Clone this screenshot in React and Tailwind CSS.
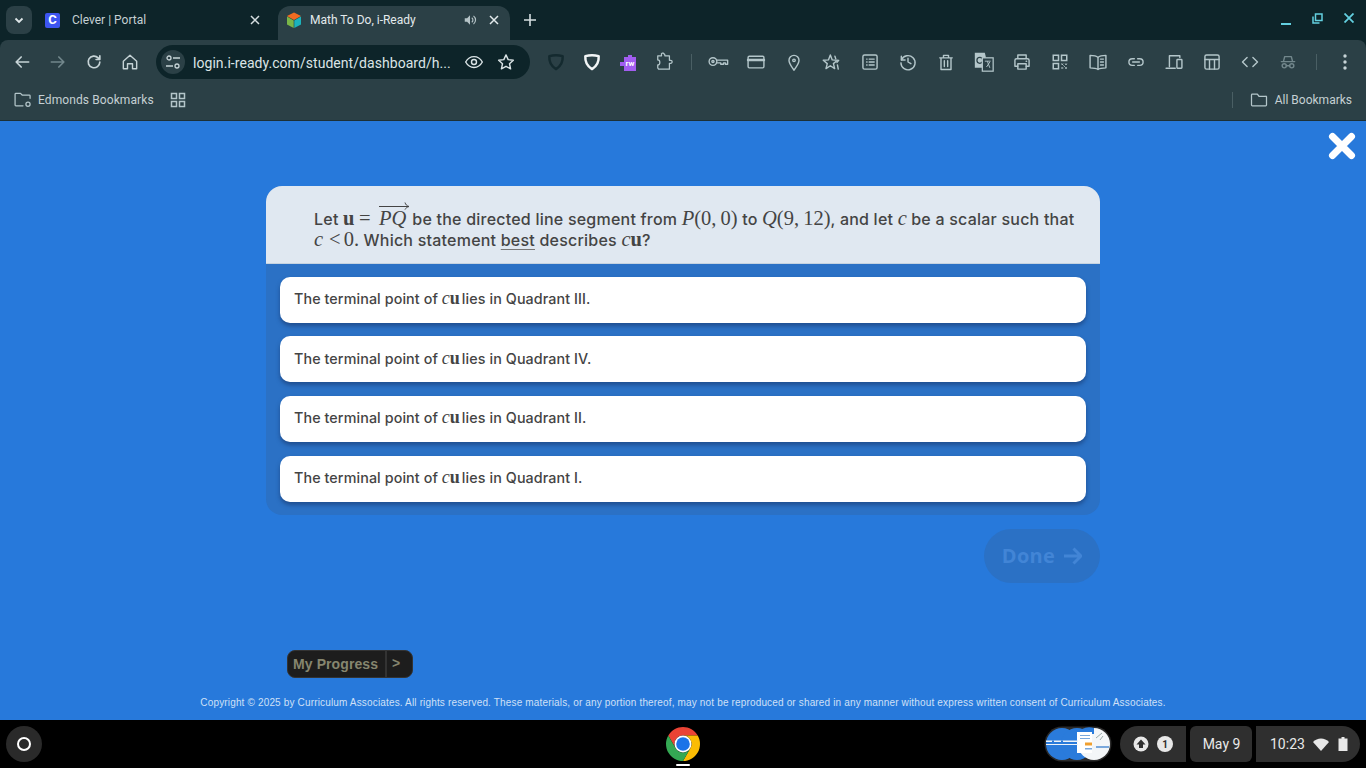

const S = ({ children, w = 20, sw = 1.7, c = "#b4c6ca", vb = "0 0 24 24", fill = "none" }) => (
  <svg width={w} height={w} viewBox={vb} fill={fill} stroke={c} strokeWidth={sw} strokeLinecap="round" strokeLinejoin="round" className="block">{children}</svg>
);

const Slot = ({ w = "w-[38px]", children }) => <div className={`${w} h-full shrink-0 flex items-center justify-center`}>{children}</div>;

const icons = [
  <S w={22} sw={1.5}><circle cx="6.500" cy="11.500" r="4.200" /><path d="M10.700 10H22.500v4.500h-2.500v-1.500h-2v1.500h-3v-1.500h-4.800" /><circle cx="6.500" cy="11.500" r="1.200" /></S>,
  <S><rect x="2.500" y="5" width="19" height="14" rx="1.500" /><path d="M2.500 9.500h19" strokeWidth="3" /></S>,
  <S><path d="M12 22c-1-2.500-6-7-6-12a6 6 0 0 1 12 0c0 5-5 9.500-6 12z" /><circle cx="12" cy="10" r="1.500" /></S>,
  <S><path d="M10 3.500l2.300 6 6.200.4-4.800 4 1.500 6-5.200-3.400-5.200 3.400 1.500-6-4.800-4 6.200-.4z" /><path d="M15.500 5l1 3M20 10l-2 2.500M18.500 15.500l1 5" /></S>,
  <S><rect x="3.500" y="3.500" width="17" height="17" rx="2" /><path d="M8 8.500h.5M8 12h.5M8 15.500h.5M11 8.500h6M11 12h6M11 15.500h6" /></S>,
  <S><path d="M4 5v4.500h4.500" /><path d="M4.200 9.500A8.500 8.500 0 1 1 3.500 13" /><path d="M12 7.500V12l3.500 2" /></S>,
  <S><path d="M4.500 7h15M9 7V4h6v3M6 7v14h12V7M10 10.500v7M14 10.500v7" /></S>,
  <svg width="20" height="20" viewBox="0 0 24 24" className="block"><path d="M1 1h12l1 4h0v14H1z" fill="#b4c6ca" /><circle cx="7" cy="10" r="3.500" fill="none" stroke="#2b4046" strokeWidth="1.500" /><rect x="10" y="7" width="13" height="16" fill="#2b4046" stroke="#b4c6ca" strokeWidth="1.500" /><path d="M13 11h7M16 11l3 8M19 12l-4 6" stroke="#b4c6ca" strokeWidth="1.100" fill="none" /></svg>,
  <S><path d="M7 8V3.500h10V8M7 17H3.500V10a2 2 0 0 1 2-2h13a2 2 0 0 1 2 2v7H17" /><rect x="7" y="14" width="10" height="6.500" /><path d="M17 11h.5" /></S>,
  <svg width="18" height="18" viewBox="0 0 24 24" className="block" fill="none" stroke="#b4c6ca" strokeWidth="2"><rect x="3" y="3" width="7" height="7" /><rect x="14" y="3" width="7" height="7" /><rect x="3" y="14" width="7" height="7" /><path d="M14 14l2 2M19 14l2 2M16.500 16.500l2 2M14 19l2 2M19 19l2 2M21 14l-2 2M16 14l-2 2M21 19l-2 2M16 19l-2 2" strokeWidth="1.200" /></svg>,
  <S><path d="M12 6.500C10 4.500 6 4 2.500 4v15c3.500 0 7.500.5 9.500 2 2-1.500 6-2 9.500-2V4c-3.500 0-7.500.5-9.500 2.500zM12 6.500V21M15 8.500h3.500M15 12h3.500M15 15.500h3.500" /></S>,
  <S><path d="M10 8H7.500a4 4 0 0 0 0 8H10M14 8h2.500a4 4 0 0 1 0 8H14M8 12h8" /></S>,
  <S><path d="M19 6.500V4.500H6.500v13M2.500 19.500h11" /><rect x="15.500" y="9" width="6" height="10.500" rx=".8" /></S>,
  <S><rect x="3.500" y="3.500" width="17" height="17" rx="2" /><path d="M3.500 9h17M9 9v11.500M15 9v11.500" /></S>,
  <S><path d="M8.500 6.500L3 12l5.500 5.500M15.500 6.500L21 12l-5.500 5.500" /></S>,
  <S c="#72878c"><path d="M4 11.500h16M6.500 11.500L8 5.500h8l1.500 6" /><circle cx="7.500" cy="16.500" r="2.500" /><circle cx="16.500" cy="16.500" r="2.500" /><path d="M10 16.500h4" /></S>,
];

const Shield = ({ c }) => (
  <svg width="20" height="20" viewBox="0 0 24 24" className="block" fill="none" stroke={c} strokeWidth="3" strokeLinejoin="round"><path d="M4 5c5-1.500 11-1.500 16 0 .5 7-3 12.500-8 15.500C7 17.500 3.500 12 4 5z" /></svg>
);

const Tune = () => (
  <svg width="16" height="16" viewBox="0 0 16 16" fill="none" stroke="#c6d3d6" strokeWidth="1.300" className="block"><circle cx="4" cy="4" r="2" /><path d="M8 4h7M1 12h7" /><circle cx="12" cy="12" r="2" /></svg>
);

const Cube = () => (
  <svg width="16" height="17" viewBox="0 0 16 17" className="block"><path d="M8 .5l7 3.500-7 4-7-4z" fill="#f26b21" /><path d="M1 4.500l6.700 4V16L1 12.500z" fill="#7ab648" /><path d="M15 4.500l-6.700 4V16l6.700-3.500z" fill="#1bb3bc" /></svg>
);

const Chrome = () => (
  <svg width="34" height="34" viewBox="2 2 44 44" className="block">
    <path d="M43.050 13A22 22 0 0 0 4.950 13L14.470 29.500A11 11 0 0 1 24 13Z" fill="#ea4335" />
    <path d="M24 46A22 22 0 0 0 43.050 13L24 13A11 11 0 0 1 33.530 29.500Z" fill="#fbbc04" />
    <path d="M4.950 13A22 22 0 0 0 24 46L33.530 29.500A11 11 0 0 1 14.470 29.500Z" fill="#34a853" />
    <circle cx="24" cy="24" r="11" fill="#fff" /><circle cx="24" cy="24" r="8.800" fill="#1a73e8" />
  </svg>
);

const Thumb = () => (
  <svg width="68" height="36" viewBox="0 0 68 36" className="block">
    <rect x="0.500" y="0.500" width="67" height="35" rx="17.500" fill="#2a2a2a" />
    <circle cx="18" cy="18" r="16" fill="#2a7bdb" />
    <circle cx="33" cy="18" r="16" fill="#2a7bdb" />
    <circle cx="50" cy="18" r="16" fill="#f4f6f8" />
    <path d="M38 3a16 16 0 0 1 12-1v6H38z" fill="#2a7bdb" />
    <path d="M33 6h15v21H33z" fill="#fff" />
    <path d="M2 14.500h32v1.500H2zM2 18h32v1H2zM48 20h17v2.500H48z" fill="#eef3f8" />
    <path d="M8 14.500h2v1.500H8zM17 14.500h2v1.500h-2z" fill="#2a7bdb" />
    <path d="M41 16.500h7v3h-7z" fill="#f0a030" />
    <path d="M36 9h10v1H36zM36 12h10v1H36zM41 22h7v1.500h-7zM52 20h13v2H52z" fill="#7aa8dc" />
    <path d="M52 12l6-5M56 14l3-4" stroke="#9aa" strokeWidth="1" />
  </svg>
);

const M = ({ children, className = "", size = "text-[20.500px]" }) => <span className={`[font-family:'Liberation_Serif',serif] leading-none tracking-normal ${size} ${className}`}>{children}</span>;
const I = ({ children }) => <M className="italic">{children}</M>;
const B = ({ children }) => <M className="font-bold">{children}</M>;

const answers = ["III", "IV", "II", "I"];

export default function App() {
  return (
    <div className="w-[1366px] h-[768px] overflow-hidden flex flex-col [font-family:Roboto,sans-serif]">
      <div className="h-10 bg-[#0d2429] flex shrink-0 pt-[6px]">
        <div className="ml-[6px] w-[26px] h-[28px] rounded-lg bg-[#2b4046] flex items-center justify-center">
          <svg width="12" height="12" viewBox="0 0 12 12" fill="none" stroke="#dfe7e9" strokeWidth="1.800"><path d="M2.500 4.500L6 8l3.500-3.500" /></svg>
        </div>
        <div className="w-[246px] h-[28px] flex items-center pl-[13px] pr-[18px] text-xs text-[#c5d0d3]">
          <div className="w-[15px] h-[15px] rounded-[2px] bg-[#3d55f0] text-white text-[13px] font-bold flex items-center justify-center">C</div>
          <span className="ml-3 flex-1">Clever | Portal</span>
          <svg width="10" height="10" viewBox="0 0 10 10" stroke="#d5dee0" strokeWidth="1.500"><path d="M1 1l8 8M9 1l-8 8" /></svg>
        </div>
        <div className="w-[232px] h-[34px] rounded-t-xl bg-[#2b4046] flex items-center pl-2 pr-[11px] pb-[6px] text-xs text-[#e3eaec]">
          <Cube />
          <span className="ml-2 flex-1">Math To Do, i-Ready</span>
          <svg width="14" height="14" viewBox="0 0 24 24" fill="#b5c3c7" className="mr-[12px]"><path d="M3 9v6h4l5 5V4L7 9z" /><path d="M15 8c1.500 1 2 2.500 2 4s-.5 3-2 4M18 5c2.500 2 3.500 4.500 3.500 7s-1 5-3.500 7" fill="none" stroke="#b5c3c7" strokeWidth="2" /></svg>
          <svg width="10" height="10" viewBox="0 0 10 10" stroke="#e3eaec" strokeWidth="1.500"><path d="M1 1l8 8M9 1l-8 8" /></svg>
        </div>
        <div className="ml-[14px] h-[28px] flex items-center">
          <svg width="12" height="12" viewBox="0 0 12 12" stroke="#d5dee0" strokeWidth="1.600"><path d="M6 0v12M0 6h12" /></svg>
        </div>
        <div className="flex-1" />
        <div className="h-[28px] flex items-center">
          <div className="w-8 flex justify-center"><div className="w-[10px] h-[2px] bg-[#63d0e0] mt-[7px]" /></div>
          <div className="w-8 flex justify-center">
            <svg width="11" height="11" viewBox="0 0 11 11" fill="none" stroke="#63d0e0" strokeWidth="1.500" className="-mt-1 -ml-[2px]"><rect x="3.500" y="1" width="6.500" height="6.500" /><path d="M1 3.500V10h6.500" /></svg>
          </div>
          <div className="w-8 mr-[0px] flex justify-center">
            <svg width="10" height="10" viewBox="0 0 10 10" stroke="#63d0e0" strokeWidth="1.800" className="-mt-1 -ml-[2px]"><path d="M.5.500l9 9M9.500.500l-9 9" /></svg>
          </div>
        </div>
      </div>

      <div className="bg-[#0d2429] shrink-0">
        <div className="bg-[#2b4046] rounded-t-lg">
          <div className="h-11 flex items-center pl-1">
            <Slot w="w-9"><S c="#c6d3d6" sw="2"><path d="M20 12H5M11 6l-6 6 6 6" /></S></Slot>
            <Slot w="w-9"><S c="#72878c" sw="2"><path d="M4 12h15M13 6l6 6-6 6" /></S></Slot>
            <Slot w="w-9"><S c="#c6d3d6" sw="2"><path d="M19 12a7 7 0 1 1-2-5l2 2M19 4.500V9h-4.500" /></S></Slot>
            <Slot w="w-9"><S c="#c6d3d6"><path d="M4 11l8-7 8 7v9h-5v-6H9v6H4z" /></S></Slot>
            <div className="ml-2 w-[374px] h-[34px] rounded-full bg-[#0d2429] flex items-center pl-[5px] pr-[14px] shrink-0">
              <div className="w-6 h-6 rounded-full bg-[#2b4046] flex items-center justify-center"><Tune /></div>
              <span className="ml-2 text-sm text-[#dbe4e6] flex-1 pt-[2px] tracking-[0.05px]">login.i-ready.com/student/dashboard/h...</span>
              <S c="#dbe4e6"><path d="M2 12c2.500-4.500 6-6.500 10-6.500s7.500 2 10 6.500c-2.500 4.500-6 6.500-10 6.500S4.500 16.500 2 12z" /><circle cx="12" cy="12" r="3" /></S>
              <div className="ml-3"><S c="#dbe4e6"><path d="M12 3.500l2.600 5.700 6.200.7-4.600 4.200 1.300 6.100L12 17.200l-5.500 3 1.300-6.100-4.600-4.200 6.200-.7z" /></S></div>
            </div>
            <div className="ml-2 h-full flex items-center">
              <Slot w="w-9"><Shield c="#142a2f" /></Slot>
              <Slot w="w-9"><Shield c="#f2f5f6" /></Slot>
              <Slot w="w-9">
                <div className="relative w-[12px] h-[14px] bg-[#a25df0] ml-1 mt-1 flex items-center justify-center text-white text-[8px] font-bold leading-none">
                  rw
                  <div className="absolute -top-[2px] left-[4px] w-[4px] h-[2px] bg-[#a25df0]" />
                  <div className="absolute top-[5px] -left-1 w-1 h-[4px] bg-[#a25df0]" />
                </div>
              </Slot>
              <Slot w="w-9"><S sw="1.500"><path d="M4.500 4.500H9V3.500a1.500 1.500 0 0 1 3-1.200 1.500 1.500 0 0 1 1 1.200v1h5.500V10H20a1.800 1.800 0 0 1 0 3.600h-1.500v7H5.500l-1-1.500V15.500C6 15.500 7 14 7 12.500S6 9.500 4.500 9.500z" /></S></Slot>
              <div className="ml-[9px] mr-[7px] w-px h-[16px] bg-[#4a5f64]" />
              {icons.map((ic, i) => <Slot key={i}>{ic}</Slot>)}
              <div className="ml-[9px] w-px h-[16px] bg-[#4a5f64]" />
              <div className="ml-[26px]"><svg width="4" height="16" viewBox="0 0 4 16" fill="#c6d3d6" className="block"><circle cx="2" cy="2" r="1.700" /><circle cx="2" cy="8" r="1.700" /><circle cx="2" cy="14" r="1.700" /></svg></div>
            </div>
          </div>
          <div className="h-9 flex items-center text-xs text-[#c5d0d3] pl-[13px] pr-[14px] pb-[6px] pt-[1px]">
            <S c="#b4c6ca" sw="1.500"><path d="M20.500 10V7a1 1 0 0 0-1-1H11L9 4H3.500a1 1 0 0 0-1 1v13a1 1 0 0 0 1 1H12" /><circle cx="18" cy="17" r="2.500" /></S>
            <span className="ml-[5px] tracking-[0.1px]">Edmonds Bookmarks</span>
            <div className="ml-[16px]"><svg width="16" height="16" viewBox="0 0 16 16" fill="none" stroke="#b4c6ca" strokeWidth="1.500" className="block"><rect x="1.500" y="1.500" width="5" height="5" /><rect x="9.500" y="1.500" width="5" height="5" /><rect x="1.500" y="9.500" width="5" height="5" /><rect x="9.500" y="9.500" width="5" height="5" /></svg></div>
            <div className="flex-1" />
            <div className="w-px h-[16px] bg-[#4a5f64] mr-[16px]" />
            <S c="#b4c6ca" sw="1.500"><path d="M21 8v10a1 1 0 0 1-1 1H4a1 1 0 0 1-1-1V6a1 1 0 0 1 1-1h6l2 2.500h8a1 1 0 0 1 1 .5z" /></S>
            <span className="ml-[6px]">All Bookmarks</span>
          </div>
        </div>
      </div>

      <div className="h-px bg-[#1c3036] shrink-0" />

      <main className="relative flex-1 min-h-0 bg-[#2779db] flex flex-col">
        <svg width="28" height="28" viewBox="0 0 28 28" className="absolute top-[11px] right-[10px]" stroke="#fff" strokeWidth="7" strokeLinecap="round"><path d="M4.500 4.500l19 19M23.500 4.500l-19 19" /></svg>

        <section className="mt-[65px] ml-[266px] w-[834px] rounded-2xl bg-[#2b71c5] shrink-0 [font-family:Inter,sans-serif]">
          <div className="h-[78px] rounded-t-2xl bg-[#e0e8f1] border-b border-[#c6d3e0] pl-[48px] pr-6 pt-[21.500px] text-[#444] text-[16px] leading-[20px] font-medium tracking-[0.22px] whitespace-nowrap">
            Let <B>u</B> <M className="mr-[4px]">=</M>{" "}
            <span className="relative inline-block leading-none mr-[1.500px]">
              <I>PQ</I>
              <svg width="31" height="9" viewBox="0 0 31 9" className="absolute -top-[7px] left-0" fill="none" stroke="#444" strokeWidth="1"><path d="M0 5.500h29.500M26 1.500c.5 2 2 3.500 4 4-2 .5-3.500 2-4 3" /></svg>
            </span>{" "}
            be the directed line segment from <I>P</I><M>(0,{"\u2009"}0)</M> to <I>Q</I><M>(9,{"\u2009"}12)</M>, and let <I>c</I> be a scalar such that
            <br />
            <I>c</I><M className="ml-[6px] mr-[3px]">&lt;</M><M>0.</M> Which statement <span className="underline decoration-[#777] underline-offset-[3px]">best</span> describes <I>c</I><B>u</B>?
          </div>
          <div className="pt-[12.600px] px-[14px] pb-[13px] flex flex-col gap-[13.700px]">
            {answers.map((a) => (
              <div key={a} className="h-[46px] rounded-[10px] bg-white shadow-[0_3px_4px_rgba(20,50,100,0.55)] flex items-center pl-[14px] pb-[2px] text-[#444] text-[14.300px] font-medium tracking-[0.1px]">
                <span>The terminal point of <M size="text-[18px]" className="italic">c</M><M size="text-[18px]" className="font-bold mr-[2px]">u</M>lies in Quadrant {a}.</span>
              </div>
            ))}
          </div>
        </section>

        <div className="ml-[266px] w-[834px] mt-[14px] flex justify-end shrink-0">
          <div className="w-[116px] h-[54px] rounded-full bg-[#2b71c5] flex items-center justify-center gap-[9px] text-[#4285d6] text-[20px] font-bold [font-family:'Open_Sans',sans-serif] tracking-[0.3px]">
            Done
            <svg width="18" height="18" viewBox="0 0 18 18" fill="none" stroke="#4285d6" strokeWidth="3"><path d="M0 9h16M9.500 1.500L17 9l-7.500 7.500" /></svg>
          </div>
        </div>

        <div className="ml-[287px] mt-[67px] w-[126px] h-[28px] rounded-lg bg-[#1d1d1d] border border-[#333] flex items-center text-[#86866f] text-[14px] font-bold [font-family:'Liberation_Sans',sans-serif] tracking-[0.1px] shrink-0">
          <span className="w-[99px] pl-[5px] pt-[1px] border-r-2 border-[#333] h-full flex items-center">My Progress</span>
          <span className="pl-[5px]">&gt;</span>
        </div>

        <p className="mt-[17px] text-center text-[10px] text-[#cfe0f7] [font-family:'Liberation_Sans',sans-serif] tracking-[0.157px]">
          Copyright © 2025 by Curriculum Associates. All rights reserved. These materials, or any portion thereof, may not be reproduced or shared in any manner without express written consent of Curriculum Associates.
        </p>
      </main>

      <footer className="relative h-12 bg-black shrink-0 flex items-center pr-[6px] pl-[6px]">
        <div className="w-9 h-9 rounded-full bg-[#2a2a2a] flex items-center justify-center">
          <div className="w-[14px] h-[14px] rounded-full border-2 border-white" />
        </div>
        <div className="absolute left-[666px] top-[7px]"><Chrome /></div>
        <div className="absolute left-[676px] top-[44px] w-[14px] h-[2px] bg-white rounded" />
        <div className="flex-1" />
        <Thumb />
        <div className="ml-2 w-[66px] h-9 rounded-l-full rounded-r-md bg-[#2f2f2f] flex items-center pl-[13px] gap-[8px]">
          <svg width="16" height="16" viewBox="0 0 16 16" className="block"><circle cx="8" cy="8" r="7.500" fill="#e8e8e8" /><path d="M8 3.500L3.500 8.500H6V12h4V8.500h2.500z" fill="#2f2f2f" /></svg>
          <div className="w-4 h-4 rounded-full bg-[#e8e8e8] text-[#2f2f2f] text-[10px] font-bold flex items-center justify-center">1</div>
        </div>
        <div className="ml-1 w-[62px] h-9 pl-[1px] rounded-md bg-[#2f2f2f] flex items-center justify-center text-[#e8e8e8] text-[14px]">May 9</div>
        <div className="ml-1 w-[104px] h-9 rounded-l-md rounded-r-full bg-[#2f2f2f] flex items-center pl-[14px] text-[#e8e8e8] text-[14px]">
          10:23
          <svg width="16" height="13" viewBox="0 0 16 13" className="ml-2"><path d="M0 4C2 1.800 5 .5 8 .5s6 1.300 8 3.500l-8 9z" fill="#e8e8e8" /></svg>
          <svg width="10" height="14" viewBox="0 0 10 14" className="ml-[9px]"><path d="M3.500 0h3v1.500H9.500V14H.5V1.500h3z" fill="#e8e8e8" /></svg>
        </div>
      </footer>
    </div>
  );
}
